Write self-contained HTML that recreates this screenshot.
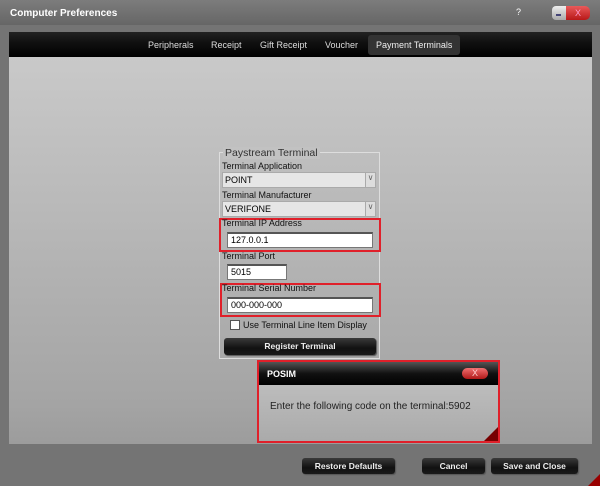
<!DOCTYPE html>
<html><head><style>
*{margin:0;padding:0;box-sizing:border-box}
body{width:600px;height:486px;overflow:hidden;background:#747474;font-family:"Liberation Sans",sans-serif;position:relative}
.a{position:absolute}
.t{font-size:9px;color:#111;white-space:nowrap}
.btn{position:absolute;background:linear-gradient(#3a3a3a,#111 60%,#1a1a1a);border-radius:3px;color:#eee;font-size:8.5px;font-weight:bold;text-align:center;box-shadow:1px 1px 1px #555}
.inp{position:absolute;background:#fff;border:1px solid #777;border-top:2px solid #555;font-size:9px;padding-left:3px;line-height:13px}
.sel{position:absolute;background:#e6e6e6;border:1px solid #aaa;font-size:9px;padding-left:2px;line-height:14px}
.red{position:absolute;border:2px solid #e0202a}
</style></head><body>
<div class="a" style="left:0;top:0;width:600px;height:25px;background:linear-gradient(#7c7c7c,#666)"></div>
<div class="a" style="left:10px;top:8px;color:#fff;font-size:10px;font-weight:bold">Computer Preferences</div>
<div class="a" style="left:516px;top:7px;color:#fff;font-size:9px">?</div>
<div class="a" style="left:552px;top:6px;width:14px;height:14px;background:linear-gradient(#eee,#aaa);border-radius:4px 0 0 4px"></div>
<div class="a" style="left:556px;top:14px;width:5px;height:2px;background:#447"></div>
<div class="a" style="left:566px;top:6px;width:24px;height:14px;background:linear-gradient(#e85a5a,#b81818);border-radius:0 5px 5px 0;color:#f9c;font-size:9px;text-align:center;line-height:14px">X</div>
<div class="a" style="left:9px;top:32px;width:583px;height:25px;background:linear-gradient(#222 0,#111 40%,#000)"></div>
<div class="a" style="left:368px;top:35px;width:92px;height:20px;background:#333;border-radius:3px"></div>
<div class="a" style="left:0;top:40px;width:600px;color:#ddd;font-size:9px">
<span class="a" style="left:148px">Peripherals</span><span class="a" style="left:211px">Receipt</span><span class="a" style="left:260px">Gift Receipt</span><span class="a" style="left:325px">Voucher</span><span class="a" style="left:376px;color:#eee">Payment Terminals</span></div>
<div class="a" style="left:9px;top:57px;width:583px;height:387px;background:linear-gradient(#c9c9c9,#a4a4a4 90%,#9c9c9c)"></div>
<div class="a" style="left:219px;top:152px;width:161px;height:207px;border:1px solid #ddd"></div>
<div class="a" style="left:223px;top:147px;background:#c2c2c2;padding:0 2px;font-size:10.5px;color:#333">Paystream Terminal</div>
<div class="a t" style="left:222px;top:161px">Terminal Application</div>
<div class="sel" style="left:222px;top:172px;width:154px;height:16px">POINT</div>
<div class="a" style="left:365px;top:173px;width:10px;height:14px;background:#ddd;border-left:1px solid #aaa;font-size:8px;color:#666;text-align:center">&#8744;</div>
<div class="a t" style="left:222px;top:190px">Terminal Manufacturer</div>
<div class="sel" style="left:222px;top:201px;width:154px;height:16px">VERIFONE</div>
<div class="a" style="left:365px;top:202px;width:10px;height:14px;background:#ddd;border-left:1px solid #aaa;font-size:8px;color:#666;text-align:center">&#8744;</div>
<div class="red" style="left:219px;top:218px;width:162px;height:34px"></div>
<div class="a t" style="left:222px;top:218px">Terminal IP Address</div>
<div class="inp" style="left:227px;top:232px;width:146px;height:16px">127.0.0.1</div>
<div class="a t" style="left:222px;top:251px">Terminal Port</div>
<div class="inp" style="left:227px;top:264px;width:60px;height:16px">5015</div>
<div class="red" style="left:220px;top:283px;width:161px;height:34px"></div>
<div class="a t" style="left:222px;top:283px">Terminal Serial Number</div>
<div class="inp" style="left:227px;top:297px;width:146px;height:16px">000-000-000</div>
<div class="a" style="left:230px;top:320px;width:10px;height:10px;background:#fff;border:1px solid #555"></div>
<div class="a t" style="left:243px;top:320px">Use Terminal Line Item Display</div>
<div class="btn" style="left:224px;top:338px;width:152px;height:17px;line-height:17px">Register Terminal</div>
<div class="a" style="left:257px;top:360px;width:243px;height:83px;border:2px solid #e0202a;background:linear-gradient(#c4c4c4,#aaa)"></div>
<div class="a" style="left:259px;top:362px;width:239px;height:23px;background:linear-gradient(#555,#111 50%,#000)"></div>
<div class="a" style="left:267px;top:369px;color:#fff;font-size:9px;font-weight:bold">POSIM</div>
<div class="a" style="left:462px;top:368px;width:26px;height:11px;background:linear-gradient(#f07070,#b01818);border-radius:6px;color:#fcc;font-size:9px;text-align:center;line-height:11px">X</div>
<div class="a" style="left:270px;top:401px;color:#222;font-size:10px">Enter the following code on the terminal:5902</div>
<div class="a" style="left:484px;top:427px;width:0;height:0;border-left:14px solid transparent;border-bottom:14px solid #700"></div>
<div class="btn" style="left:302px;top:458px;width:93px;height:16px;line-height:16px">Restore Defaults</div>
<div class="btn" style="left:422px;top:458px;width:63px;height:16px;line-height:16px">Cancel</div>
<div class="btn" style="left:491px;top:458px;width:87px;height:16px;line-height:16px">Save and Close</div>
<div class="a" style="left:588px;top:474px;width:0;height:0;border-left:12px solid transparent;border-bottom:12px solid #900"></div>
</body></html>
